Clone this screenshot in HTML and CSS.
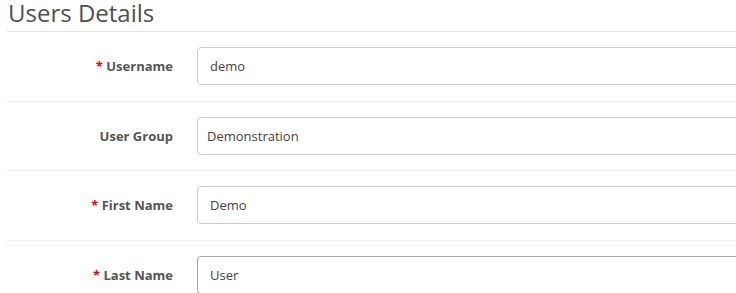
FILE: index.html
```html
<!DOCTYPE html>
<html>
<head>
<meta charset="utf-8">
<link rel="stylesheet" href="styles.css">
</head>
<body>
<div class="page">
  <h3 class="title">Users Details</h3>
  <form class="form">
    <div class="row">
      <label class="label"><span class="req">*</span> Username</label>
      <input class="control" type="text" value="demo">
    </div>
    <div class="row">
      <label class="label">User Group</label>
      <select class="control select"><option>Demonstration</option></select>
    </div>
    <div class="row">
      <label class="label"><span class="req">*</span> First Name</label>
      <input class="control" type="text" value="Demo">
    </div>
    <div class="row last">
      <label class="label"><span class="req">*</span> Last Name</label>
      <input class="control active" type="text" value="User">
    </div>
  </form>
</div>
</body>
</html>
```
FILE: styles.css
```css
html, body {
  margin: 0;
  padding: 0;
  background: #fff;
  overflow: hidden;
}
body {
  font-family: "Open Sans", "Liberation Sans", sans-serif;
  color: #555;
}
.page {
  width: 800px;
  padding-left: 7px;
}
.title {
  margin: 0;
  font-size: 24px;
  font-weight: 400;
  line-height: 26px;
  color: #505050;
  padding: 0 0 5px 1px;
  border-bottom: 1px solid #e5e5e5;
}
.form {
  margin: 0;
}
.row {
  display: grid;
  grid-template-columns: 166px 1fr;
  column-gap: 24px;
  align-items: center;
  padding: 15px 0 15.67px;
  border-bottom: 1px solid #eee;
}
.row.last {
  border-bottom: none;
}
.label {
  text-align: right;
  font-size: 13px;
  font-weight: 700;
  color: #555;
}
.req {
  color: #e00;
}
.control {
  box-sizing: border-box;
  width: 100%;
  height: 38px;
  margin: 0;
  padding: 0 12px;
  border: 1px solid #ccc;
  border-radius: 4px;
  background: #fff;
  font-family: "Open Sans", "Liberation Sans", sans-serif;
  font-size: 13px;
  color: #444;
  outline: none;
}
.select {
  -webkit-appearance: none;
  appearance: none;
  padding-left: 9px;
}
.control.active {
  border-color: #a9a9a9;
}
```
